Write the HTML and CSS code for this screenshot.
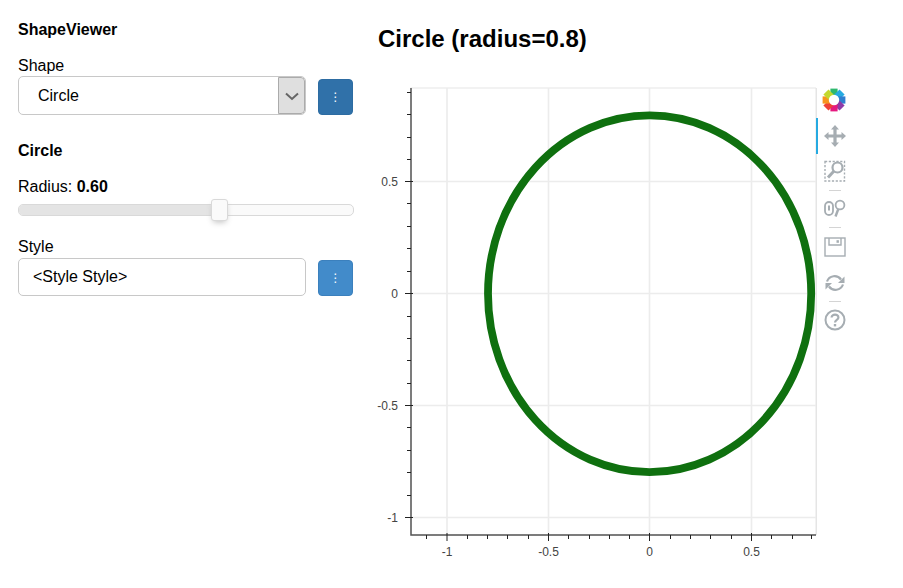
FILE: index.html
```html
<!DOCTYPE html>
<html lang="en">
<head>
    <meta charset="UTF-8">
    <meta name="viewport" content="width=device-width, initial-scale=1.0">
    <title>ShapeViewer</title>
    <link rel="stylesheet" href="styles.css">
</head>
<body>
    <div class="app">
        <div class="sidebar">
            <div class="app-title">ShapeViewer</div>

            <div class="label shape-label">Shape</div>
            <div class="control-row">
                <div class="select">
                    <span class="select-text">Circle</span>
                    <span class="select-arrow">
                        <svg width="16" height="10" viewBox="0 0 16 10"><path d="M2 2.5 L8 8 L14 2.5" fill="none" stroke="#666" stroke-width="2"/></svg>
                    </span>
                </div>
                <button class="dots-btn dark">&#8942;</button>
            </div>

            <div class="section-title">Circle</div>

            <div class="label radius-label">Radius: <b>0.60</b></div>
            <div class="slider">
                <div class="slider-fill"></div>
                <div class="slider-handle"></div>
            </div>

            <div class="label style-label">Style</div>
            <div class="control-row style-row">
                <div class="text-input">&lt;Style Style&gt;</div>
                <button class="dots-btn">&#8942;</button>
            </div>
        </div>

        <div class="main">
            <h2 class="plot-title">Circle (radius=0.8)</h2>
            <div class="plot-row">
                <svg class="plot" width="446" height="490" viewBox="370 80 446 490">
                    <rect x="411" y="88" width="405" height="447" fill="#fff" stroke="#e5e5e5"/>
                    <path class="grid" d="M447 88V535M548.5 88V535M649.5 88V535M751.5 88V535M411 181.5H816M411 293.5H816M411 405.5H816M411 517.5H816"/>
                    <ellipse cx="649.6" cy="293.7" rx="161.6" ry="178.4" fill="none" stroke="#0f700f" stroke-width="7.8"/>
                    <path class="axis" d="M411 88V535H816"/>
                    <path class="tick" d="M411 92.5h-4M411 114.5h-4M411 137.5h-4M411 159.5h-4M411 203.5h-4M411 226.5h-4M411 248.5h-4M411 271.5h-4M411 316.5h-4M411 338.5h-4M411 360.5h-4M411 383.5h-4M411 427.5h-4M411 450.5h-4M411 472.5h-4M411 495.5h-4"/>
                    <path class="tick" d="M413 181.5h-8M413 293.5h-8M413 405.5h-8M413 517.5h-8"/>
                    <path class="tick" d="M426.5 535v4M467.5 535v4M487.5 535v4M507.5 535v4M528.5 535v4M568.5 535v4M589.5 535v4M609.5 535v4M629.5 535v4M670.5 535v4M690.5 535v4M710.5 535v4M731.5 535v4M771.5 535v4M792.5 535v4M811.5 535v4"/>
                    <path class="tick" d="M447 533v8M548.5 533v8M649.5 533v8M751.5 533v8"/>
                    <g class="tick-label y-labels">
                        <text x="398" y="185.5">0.5</text>
                        <text x="398" y="297.5">0</text>
                        <text x="398" y="409.5">-0.5</text>
                        <text x="398" y="521.5">-1</text>
                    </g>
                    <g class="tick-label x-labels">
                        <text x="447" y="556">-1</text>
                        <text x="548.5" y="556">-0.5</text>
                        <text x="649.5" y="556">0</text>
                        <text x="751.5" y="556">0.5</text>
                    </g>
                </svg>

                <div class="toolbar">
                    <svg class="logo" width="26" height="26" viewBox="0 0 26 26">
                        <rect x="9.4" y="1.6" width="7.2" height="7.2" fill="#2fb86e"/>
                        <rect x="9.4" y="1.6" width="7.2" height="7.2" fill="#26aae1" transform="rotate(45 13 13)"/>
                        <rect x="9.4" y="1.6" width="7.2" height="7.2" fill="#2f7fd0" transform="rotate(90 13 13)"/>
                        <rect x="9.4" y="1.6" width="7.2" height="7.2" fill="#8e3ba8" transform="rotate(135 13 13)"/>
                        <rect x="9.4" y="1.6" width="7.2" height="7.2" fill="#e5197f" transform="rotate(180 13 13)"/>
                        <rect x="9.4" y="1.6" width="7.2" height="7.2" fill="#ef4136" transform="rotate(225 13 13)"/>
                        <rect x="9.4" y="1.6" width="7.2" height="7.2" fill="#f7941e" transform="rotate(270 13 13)"/>
                        <rect x="9.4" y="1.6" width="7.2" height="7.2" fill="#c4d82e" transform="rotate(315 13 13)"/>
                        <circle cx="13" cy="13" r="5.2" fill="#fff"/>
                    </svg>
                    <div class="tool pan active">
                        <svg width="22" height="22" viewBox="0 0 22 22"><path d="M11 0 L15 4.5 H12.6 V9.4 H17.5 V7 L22 11 L17.5 15 V12.6 H12.6 V17.5 H15 L11 22 L7 17.5 H9.4 V12.6 H4.5 V15 L0 11 L4.5 7 V9.4 H9.4 V4.5 H7 Z" fill="#a6adb2"/></svg>
                    </div>
                    <div class="tool box-zoom">
                        <svg width="22" height="22" viewBox="0 0 22 22">
                            <rect x="1" y="1.5" width="19.5" height="19.5" fill="none" stroke="#a6adb2" stroke-width="1.4" stroke-dasharray="2.2 1.6"/>
                            <circle cx="13.5" cy="7.5" r="5" fill="#fff" stroke="#a6adb2" stroke-width="2.2"/>
                            <path d="M10 11 L4 17.5" stroke="#a6adb2" stroke-width="3"/>
                        </svg>
                    </div>
                    <div class="divider"></div>
                    <div class="tool wheel-zoom">
                        <svg width="22" height="20" viewBox="0 0 22 20">
                            <rect x="1" y="3" width="8" height="13" rx="4" fill="none" stroke="#a6adb2" stroke-width="1.8"/>
                            <path d="M5 6.5v5" stroke="#a6adb2" stroke-width="2"/>
                            <circle cx="16" cy="6" r="4.4" fill="none" stroke="#a6adb2" stroke-width="1.8"/>
                            <path d="M14.3 10 L11.5 17.5" stroke="#a6adb2" stroke-width="2.4"/>
                        </svg>
                    </div>
                    <div class="divider"></div>
                    <div class="tool save">
                        <svg width="22" height="20" viewBox="0 0 22 20">
                            <rect x="1" y="1" width="20" height="18" fill="none" stroke="#a6adb2" stroke-width="1.4"/>
                            <path d="M5 1 V8 H17 V1" fill="none" stroke="#a6adb2" stroke-width="1.4"/>
                            <rect x="12.5" y="3.2" width="2.4" height="2.6" fill="#a6adb2"/>
                        </svg>
                    </div>
                    <div class="tool reset">
                        <svg width="22" height="20" viewBox="0 0 22 20">
                            <path d="M3 8.5 A8 8 0 0 1 17 6.5" fill="none" stroke="#a6adb2" stroke-width="2.2"/>
                            <path d="M20.5 3.5 V10 H14 Z" fill="#a6adb2"/>
                            <path d="M19 11.5 A8 8 0 0 1 5 13.5" fill="none" stroke="#a6adb2" stroke-width="2.2"/>
                            <path d="M1.5 16.5 V10 H8 Z" fill="#a6adb2"/>
                        </svg>
                    </div>
                    <div class="divider"></div>
                    <div class="tool help">
                        <svg width="22" height="22" viewBox="0 0 22 22">
                            <circle cx="11" cy="11" r="9.5" fill="none" stroke="#a6adb2" stroke-width="2"/>
                            <path d="M7.6 8.6 C7.6 4.6 14.6 4.8 14.4 8.6 C14.3 11 11 10.8 11 13.6" fill="none" stroke="#a6adb2" stroke-width="2.2"/>
                            <rect x="9.8" y="15" width="2.4" height="2.4" fill="#a6adb2"/>
                        </svg>
                    </div>
                </div>
            </div>
        </div>
    </div>
</body>
</html>
```
FILE: styles.css
```css
body {
    margin: 0;
    font-family: "Liberation Sans", Arial, sans-serif;
    font-size: 16px;
    color: #000;
    background: #fff;
}
.app {
    display: flex;
}
.sidebar {
    width: 336px;
    padding: 21px 0 0 18px;
    flex-shrink: 0;
}
.app-title {
    font-weight: bold;
    line-height: 18px;
}
.label {
    line-height: 18px;
}
.shape-label {
    margin-top: 18px;
    margin-bottom: 1px;
}
.control-row {
    display: flex;
    align-items: flex-end;
    justify-content: space-between;
    width: 335px;
}
.select {
    width: 288px;
    height: 39px;
    box-sizing: border-box;
    border: 1px solid #c8c8c8;
    border-radius: 5px;
    display: flex;
    align-items: center;
    overflow: hidden;
}
.select-text {
    flex: 1;
    padding-left: 19px;
}
.select-arrow {
    width: 27px;
    height: 100%;
    box-sizing: border-box;
    background: #dfdfdf;
    border: 1px solid #ababab;
    border-radius: 0 4px 4px 0;
    display: flex;
    align-items: center;
    justify-content: center;
}
.dots-btn {
    width: 35px;
    height: 36px;
    padding: 0;
    border: 1px solid #3b80bd;
    border-radius: 4px;
    background: #428bca;
    color: #fff;
    font: 12px "DejaVu Sans", sans-serif;
}
.dots-btn.dark {
    background: #3071a9;
    border-color: #2d6ca2;
}
.section-title {
    font-weight: bold;
    line-height: 18px;
    margin-top: 27px;
}
.radius-label {
    margin-top: 18px;
}
.slider {
    position: relative;
    width: 336px;
    height: 12px;
    box-sizing: border-box;
    margin-top: 8px;
    border: 1px solid #d9d9d9;
    border-radius: 5px;
    background: #fafafa;
}
.slider-fill {
    width: 201px;
    height: 100%;
    background: #e4e4e4;
    border-radius: 4px 0 0 4px;
}
.slider-handle {
    position: absolute;
    left: 192px;
    top: -6px;
    width: 17px;
    height: 22px;
    box-sizing: border-box;
    border: 1px solid #d9d9d9;
    border-radius: 3px;
    background: #fafafa;
    box-shadow: 0 3px 6px -2px #bbb;
}
.style-label {
    margin-top: 22px;
    margin-bottom: 2px;
}
.text-input {
    width: 288px;
    height: 38px;
    box-sizing: border-box;
    border: 1px solid #c8c8c8;
    border-radius: 5px;
    padding-left: 14px;
    line-height: 35px;
}
.main {
    margin-left: 16px;
}
.plot-title {
    margin: 0;
    padding: 25px 0 0 8px;
    font-size: 24px;
    line-height: 28px;
    font-weight: bold;
}
.plot-row {
    display: flex;
    margin-top: 27px;
}
.plot {
    display: block;
}
.grid {
    fill: none;
    stroke: #ececec;
    stroke-width: 1.6;
}
.axis {
    fill: none;
    stroke: #555;
    stroke-width: 1.5;
}
.tick {
    fill: none;
    stroke: #222;
    stroke-width: 1;
}
.tick-label {
    font-family: "Liberation Sans", Arial, sans-serif;
    font-size: 12px;
    fill: #444;
}
.y-labels {
    text-anchor: end;
}
.x-labels {
    text-anchor: middle;
}
.toolbar {
    width: 36px;
    border-left: 1px solid #e5e5e5;
    box-sizing: border-box;
    height: 447px;
    margin-top: 8px;
    display: flex;
    flex-direction: column;
    align-items: center;
}
.tool {
    display: flex;
    align-items: center;
    justify-content: center;
    height: 20px;
    width: 100%;
}
.logo {
    flex-shrink: 0;
    margin-top: -1px;
    margin-left: -1px;
}
.pan {
    height: 36px;
    margin-top: 5px;
    box-sizing: border-box;
    border-left: 2px solid #26aae1;
    margin-left: -1px;
    width: calc(100% + 1px);
}
.box-zoom {
    height: 22px;
    margin-top: 6px;
}
.divider {
    width: 12px;
    height: 1px;
    background: #d4d4d4;
    margin-top: 8px;
    flex-shrink: 0;
}
.wheel-zoom {
    margin-top: 8px;
}
.save {
    margin-top: 9px;
}
.reset {
    margin-top: 16px;
}
.help {
    height: 22px;
    margin-top: 7px;
}
```
